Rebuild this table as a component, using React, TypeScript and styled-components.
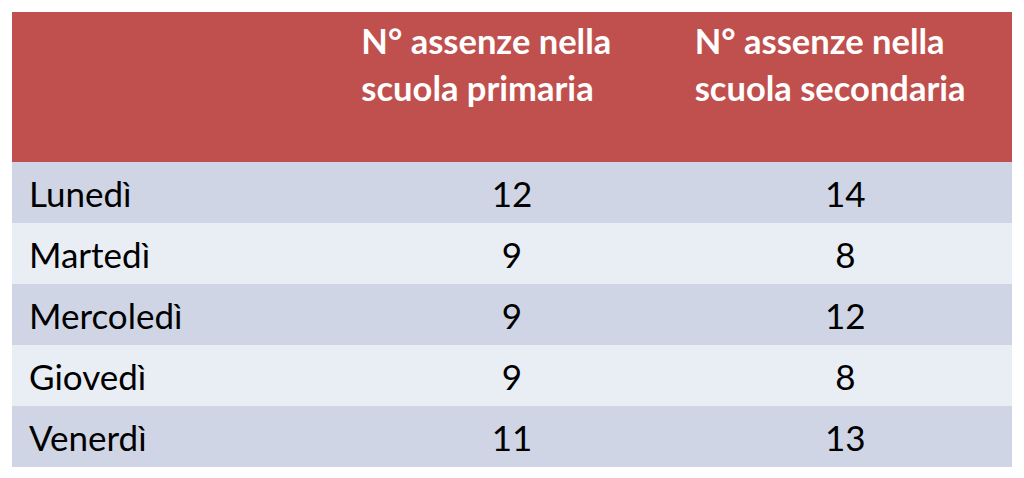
import styled, { createGlobalStyle } from "styled-components";

const GlobalStyle = createGlobalStyle`
  html, body {
    margin: 0;
    padding: 0;
    background: #ffffff;
  }
  body {
    font-family: Lato, "Open Sans", "Noto Sans", sans-serif;
  }
`;

const Page = styled.div`
  padding: 12px 12px 0 12px;
`;

const Table = styled.div`
  display: grid;
  grid-template-columns: repeat(3, 1fr);
  grid-template-rows: 150px repeat(5, 61px);
  width: 1000px;
`;

const HeaderCell = styled.div`
  background: #c0504d;
  color: #ffffff;
  font-weight: 700;
  font-size: 34.5px;
  line-height: 47px;
  padding: 5px 15px 0 16px;
  white-space: nowrap;
`;

const Cell = styled.div<{ $odd: boolean; $center?: boolean }>`
  background: ${(props) => (props.$odd ? "#cfd5e5" : "#e9edf4")};
  color: #000000;
  font-size: 35px;
  display: flex;
  align-items: center;
  justify-content: ${(props) => (props.$center ? "center" : "flex-start")};
  padding: 0 17px;
`;

const rows = [
  { day: "Lunedì", primaria: 12, secondaria: 14 },
  { day: "Martedì", primaria: 9, secondaria: 8 },
  { day: "Mercoledì", primaria: 9, secondaria: 12 },
  { day: "Giovedì", primaria: 9, secondaria: 8 },
  { day: "Venerdì", primaria: 11, secondaria: 13 },
];

export default function App() {
  return (
    <Page>
      <GlobalStyle />
      <Table>
        <HeaderCell />
        <HeaderCell>
          N° assenze nella
          <br />
          scuola primaria
        </HeaderCell>
        <HeaderCell>
          N° assenze nella
          <br />
          scuola secondaria
        </HeaderCell>
        {rows.map((row, i) => [
          <Cell key={row.day} $odd={i % 2 == 0}>
            {row.day}
          </Cell>,
          <Cell key={row.day + "-p"} $odd={i % 2 == 0} $center>
            {row.primaria}
          </Cell>,
          <Cell key={row.day + "-s"} $odd={i % 2 == 0} $center>
            {row.secondaria}
          </Cell>,
        ])}
      </Table>
    </Page>
  );
}
